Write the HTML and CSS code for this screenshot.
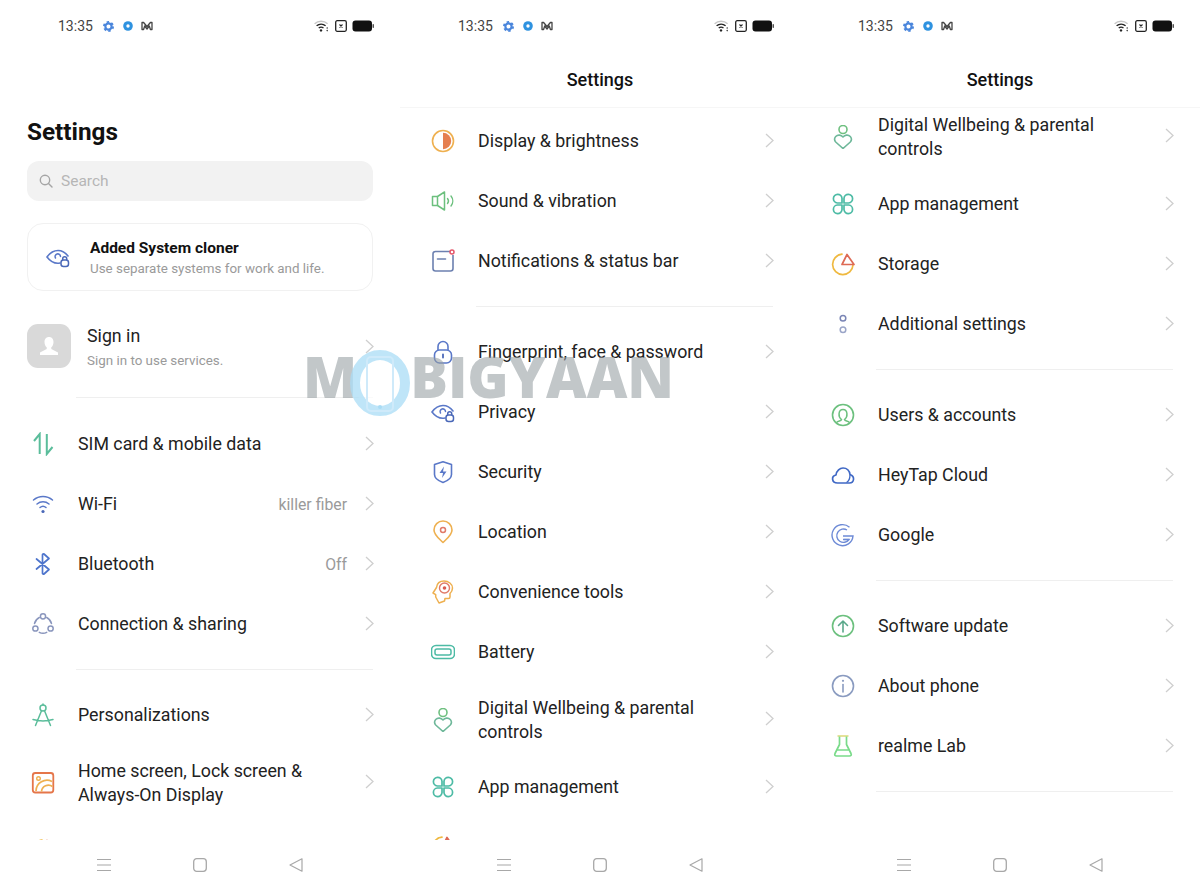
FILE: index.html
```html
<!DOCTYPE html>
<html lang="en">
<head>
<meta charset="utf-8">
<title>Settings</title>
<link rel="stylesheet" href="styles.css">
</head>
<body>
<svg class="sprite" aria-hidden="true">
  <defs>
    <symbol id="s-gear" viewBox="0 0 12 12"><circle cx="6" cy="6" r="3.400" fill="none" stroke="#4a86dc" stroke-width="2.400"/><circle cx="6" cy="6" r="5" fill="none" stroke="#4a86dc" stroke-width="2" stroke-dasharray="2.600 2.636"/></symbol>
    <symbol id="s-dot" viewBox="0 0 10 10"><circle cx="5" cy="5" r="4.800" fill="#2e92e0"/><circle cx="5" cy="5" r="1.700" fill="#fff"/></symbol>
    <symbol id="s-m" viewBox="0 0 12 10"><path d="M1 1.500h1.600L6 5.500l3.400-4H11v7H9.400L8.300 5 6 8 3.700 5 2.600 8.500H1z" fill="none" stroke="#444" stroke-width="1.300" stroke-linejoin="round"/></symbol>
    <symbol id="s-wifi" viewBox="0 0 15 12"><path d="M.6 3.800a9.500 9.500 0 0 1 13 0" fill="none" stroke="#c6c6c6" stroke-width="1.300"/><path d="M2.600 5.800a7 7 0 0 1 9 0M4.700 8a4 4 0 0 1 4.800 0" fill="none" stroke="#222" stroke-width="1.400"/><circle cx="7" cy="10.400" r="1.200" fill="#222"/><circle cx="13.200" cy="8" r=".8" fill="#444"/><circle cx="13.200" cy="10.600" r=".8" fill="#444"/></symbol>
    <symbol id="s-x" viewBox="0 0 12 12"><rect x=".7" y=".7" width="10.600" height="10.600" rx="1.500" fill="none" stroke="#222" stroke-width="1.300"/><path d="M4.500 4.500l3 3m0-3l-3 3" stroke="#222" stroke-width="1.100"/></symbol>
    <symbol id="s-bat" viewBox="0 0 22 12"><rect x=".5" y=".5" width="19.500" height="11" rx="3" fill="#111"/><rect x="20.500" y="4" width="1.500" height="4" rx=".7" fill="#555"/></symbol>

    <symbol id="i-sim" viewBox="0 0 24 24"><path d="M3 9l5.700-7v20M21.500 15l-5.700 7V2" fill="none" stroke="#5bbd9b" stroke-width="2"/></symbol>
    <symbol id="i-wifi" viewBox="0 0 24 24"><path d="M2.500 8a14.500 14.500 0 0 1 19 0M6 12a9.500 9.500 0 0 1 12 0M9 15.500a4.500 4.500 0 0 1 6 0" fill="none" stroke="#5a78c8" stroke-width="1.500" stroke-linecap="round"/><circle cx="12" cy="19.500" r="1.600" fill="#4a68b8"/></symbol>
    <symbol id="i-bt" viewBox="0 0 24 24"><path d="M5.500 7L18 17.500l-5 4.500a1 1 0 0 1-1.500-.7V2.700a1 1 0 0 1 1.500-.7l5 4.500L5.500 17" fill="none" stroke="#4d74cc" stroke-width="1.700" stroke-linecap="round" stroke-linejoin="round"/></symbol>
    <symbol id="i-conn" viewBox="0 0 24 24"><g fill="none" stroke="#8a96bd" stroke-width="1.500"><circle cx="12" cy="4.300" r="2.600"/><circle cx="4.400" cy="16.500" r="2.600"/><circle cx="19.600" cy="16.500" r="2.600"/><path d="M8.300 5.500A9 9 0 0 0 3.500 11.500M15.700 5.500a9 9 0 0 1 4.800 6M8.300 20.300a8 8 0 0 0 7.400 0" stroke-linecap="round"/></g></symbol>
    <symbol id="i-comp" viewBox="0 0 24 24"><g fill="none" stroke="#5bbd9b" stroke-width="1.500" stroke-linecap="round"><circle cx="12" cy="5" r="3"/><path d="M12 1v1M10.500 7.800L4.500 22.500M13.500 7.800l6 14.700M2 16.500c6 1.700 14 1.700 20 0"/></g></symbol>
    <symbol id="i-home" viewBox="0 0 24 24"><rect x="1.800" y="2" width="20.500" height="19.500" rx="2.500" fill="none" stroke="#e5764a" stroke-width="1.800"/><circle cx="7.500" cy="7.500" r="1.800" fill="none" stroke="#eeb050" stroke-width="1.400"/><path d="M5 20a11 11 0 0 1 16-9.500M10.500 20.500a7 7 0 0 1 11-5" fill="none" stroke="#eeb050" stroke-width="1.700"/></symbol>
    <symbol id="i-disp" viewBox="0 0 24 24"><circle cx="12" cy="12" r="10.500" fill="none" stroke="#efb04f" stroke-width="1.600"/><path d="M12 3.800a8.200 8.200 0 0 1 0 16.400z" fill="#e57f50"/></symbol>
    <symbol id="i-sound" viewBox="0 0 24 24"><path d="M1.500 7.500h5v9h-5zM6.500 7.500L13.500 3v18l-7-4.500" fill="none" stroke="#6cc07e" stroke-width="1.500" stroke-linejoin="round"/><path d="M16.500 9.500a4 4 0 0 1 0 5M20 7a8 8 0 0 1 0 10" fill="none" stroke="#6cc07e" stroke-width="1.400" stroke-linecap="round"/></symbol>
    <symbol id="i-notif" viewBox="0 0 24 24"><path d="M19 2.500H4.500a2.500 2.500 0 0 0-2.500 2.500v14.500A2.500 2.500 0 0 0 4.500 22h15a2.500 2.500 0 0 0 2.500-2.500V6" fill="none" stroke="#6c80b0" stroke-width="1.600"/><path d="M6.500 10h8" stroke="#6c80b0" stroke-width="1.600" stroke-linecap="round"/><circle cx="21" cy="3" r="2" fill="none" stroke="#e4576b" stroke-width="1.500"/></symbol>
    <symbol id="i-lock" viewBox="0 0 24 24"><rect x="3.500" y="10" width="17" height="13" rx="5" fill="none" stroke="#5a78c8" stroke-width="1.600"/><path d="M7 10V6.500a5 5 0 0 1 10 0V10" fill="none" stroke="#5a78c8" stroke-width="1.600"/><path d="M12 14.500v3" stroke="#4a68b8" stroke-width="1.800" stroke-linecap="round"/></symbol>
    <symbol id="i-eye" viewBox="0 0 24 24"><path d="M14 18c-5.500 1-10-2-13-6 2.500-3.500 7-6.500 11-6.500 4 0 7.500 2.200 10 5.500" fill="none" stroke="#5a78c8" stroke-width="1.600" stroke-linecap="round"/><path d="M14.500 11.500a2.700 2.700 0 1 0-5 1.500" fill="none" stroke="#5a78c8" stroke-width="1.500" stroke-linecap="round"/><rect x="15" y="15" width="7.500" height="6.500" rx="2.500" fill="#fff" stroke="#4a68b8" stroke-width="1.500"/><path d="M16.700 15v-1.300a2 2 0 0 1 4 0V15" fill="none" stroke="#4a68b8" stroke-width="1.500"/></symbol>
    <symbol id="i-shield" viewBox="0 0 24 24"><path d="M12 1.800l8.500 2.700v10c0 4-4.500 6.500-8.500 8-4-1.500-8.500-4-8.500-8v-10z" fill="none" stroke="#5a78c8" stroke-width="1.600" stroke-linejoin="round"/><path d="M13 6.500L8.500 13h3.500l-1 5 4.500-6.500H12z" fill="#5a78c8"/></symbol>
    <symbol id="i-pin" viewBox="0 0 24 24"><path d="M12 22.500C7.500 18 3 15 3 10a9 9 0 0 1 18 0c0 5-4.500 8-9 12.500z" fill="none" stroke="#eeb050" stroke-width="1.600" stroke-linejoin="round"/><circle cx="12" cy="10" r="2.500" fill="none" stroke="#e07a68" stroke-width="1.500"/></symbol>
    <symbol id="i-head" viewBox="0 0 24 24"><path d="M8 23l5.500-2 .5-2.500h3.500c1 0 1.500-.8 1.500-1.500v-3.500c2-2 2.500-3.500 2.500-5.500C21.500 4 17.500 1 13 1S6 3.500 5.500 7.500L2 13l2.700 1.700V17z" fill="none" stroke="#eeb050" stroke-width="1.500" stroke-linejoin="round"/><circle cx="13.500" cy="8" r="5" fill="none" stroke="#e07a68" stroke-width="1.400"/><circle cx="13.500" cy="8" r="1.800" fill="#d95c50"/></symbol>
    <symbol id="i-bat" viewBox="0 0 24 24"><rect x=".5" y="5.500" width="23" height="13" rx="4.500" fill="none" stroke="#4dbba5" stroke-width="1.600"/><rect x="4" y="9" width="16" height="6" rx="2" fill="none" stroke="#4dbba5" stroke-width="1.500"/></symbol>
    <symbol id="i-well" viewBox="0 0 24 24"><circle cx="12" cy="4.500" r="4" fill="none" stroke="#6fc080" stroke-width="1.600"/><path d="M12 23.500l-7.300-6.500a4.300 4.300 0 0 1 0-5.500c2.300-2.300 5.500-1.500 7.300.5 1.800-2 5-2.800 7.300-.5a4.300 4.300 0 0 1 0 5.500z" fill="none" stroke="#6fb89a" stroke-width="1.600" stroke-linejoin="round"/></symbol>
    <symbol id="i-app" viewBox="0 0 24 24"><g fill="none" stroke="#4dbba5" stroke-width="1.700" stroke-linejoin="round"><path d="M11 11H6.300A4.300 4.300 0 1 1 11 6.300zM13 11h4.700A4.300 4.300 0 1 0 13 6.300zM11 13H6.300A4.300 4.300 0 1 0 11 17.700zM13 13h4.700A4.300 4.300 0 1 1 13 17.700z"/></g></symbol>
    <symbol id="i-stor" viewBox="0 0 24 24"><path d="M11 2.200A10.200 10.200 0 1 0 22 13" fill="none" stroke="#efb940" stroke-width="1.700" stroke-linecap="round"/><path d="M16 2.500L23 12.500H11z" fill="none" stroke="#dd6a55" stroke-width="1.700" stroke-linejoin="round"/></symbol>
    <symbol id="i-more" viewBox="0 0 24 24"><circle cx="12" cy="6.300" r="2.800" fill="none" stroke="#7a85b5" stroke-width="1.500"/><circle cx="12" cy="17.700" r="2.800" fill="none" stroke="#9aa5c8" stroke-width="1.500"/></symbol>
    <symbol id="i-user" viewBox="0 0 24 24"><circle cx="12" cy="12" r="10.500" fill="none" stroke="#6cc07e" stroke-width="1.600"/><path d="M5.500 19.500c2-2 4.500-1 5-3-3.500-2.500-3.500-10 1.500-10s5 7.500 1.500 10c.5 2 3 1 5 3" fill="none" stroke="#6cc07e" stroke-width="1.500"/></symbol>
    <symbol id="i-cloud" viewBox="0 0 24 24"><path d="M6.500 20C.5 20 0 13 5 12c.5-4.500 4-7 7-7 4 0 6.500 3 7 6.500 5.500 2 4 8.500-.500 8.500z" fill="none" stroke="#3f68c5" stroke-width="1.700" stroke-linejoin="round"/><path d="M15.500 19.500c3-1.500 3.500-5 3.500-8" fill="none" stroke="#3f68c5" stroke-width="1.300"/></symbol>
    <symbol id="i-goog" viewBox="0 0 24 24"><path d="M18.500 4.300A10.500 10.500 0 1 0 22 13H12" fill="none" stroke="#6d8ad6" stroke-width="1.400"/><path d="M16 7a6.700 6.700 0 1 0 2 9.500H12.500" fill="none" stroke="#6d8ad6" stroke-width="1.400"/><path d="M12 16.500h6" stroke="#6d8ad6" stroke-width="1.300"/></symbol>
    <symbol id="i-up" viewBox="0 0 24 24"><circle cx="12" cy="12" r="10.500" fill="none" stroke="#6cc07e" stroke-width="1.600"/><path d="M12 18V7M7.500 11.500L12 7l4.500 4.500" fill="none" stroke="#5aa88a" stroke-width="1.600" stroke-linecap="round" stroke-linejoin="round"/></symbol>
    <symbol id="i-info" viewBox="0 0 24 24"><circle cx="12" cy="12" r="10.500" fill="none" stroke="#8a9bc0" stroke-width="1.600"/><path d="M12 10.500V18" stroke="#8a9bc0" stroke-width="1.600" stroke-linecap="round"/><circle cx="12" cy="6.800" r="1.100" fill="#8a9bc0"/></symbol>
    <symbol id="i-flask" viewBox="0 0 24 24"><path d="M6.500 2h11" stroke="#e2df8e" stroke-width="1.800"/><path d="M8.500 2.500v8L4 19.500c-.7 1.500 0 2.500 1.500 2.500h13c1.500 0 2.200-1 1.500-2.500l-4.500-9v-8M6.500 16h11" fill="none" stroke="#7adb8a" stroke-width="1.700" stroke-linejoin="round"/></symbol>
    <symbol id="i-chev" viewBox="0 0 9 15"><path d="M1 1l7 6.500L1 14" fill="none" stroke="#cfcfcf" stroke-width="1.300"/></symbol>
    <symbol id="n-menu" viewBox="0 0 14 14"><path d="M0 1.500h14M0 7h14M0 12.500h14" stroke="#a8a8a8" stroke-width="1.200"/></symbol>
    <symbol id="n-home" viewBox="0 0 14 14"><rect x=".7" y=".7" width="12.600" height="12.600" rx="3" fill="none" stroke="#a8a8a8" stroke-width="1.300"/></symbol>
    <symbol id="n-back" viewBox="0 0 14 14"><path d="M13 .8v12.400L1 7z" fill="none" stroke="#a8a8a8" stroke-width="1.200" stroke-linejoin="round"/></symbol>
  </defs>
</svg>

<main class="screens">

  <section class="panel">
    <header class="status">
      <span class="time">13:35</span>
      <svg class="st gear"><use href="#s-gear"/></svg>
      <svg class="st dot"><use href="#s-dot"/></svg>
      <svg class="st mail"><use href="#s-m"/></svg>
      <span class="grow"></span>
      <svg class="st wifi"><use href="#s-wifi"/></svg>
      <svg class="st xbox"><use href="#s-x"/></svg>
      <svg class="st batt"><use href="#s-bat"/></svg>
    </header>
    <div class="content">
      <h1 class="big-title">Settings</h1>
      <div class="search">
        <svg class="search-icon" viewBox="0 0 14 14"><circle cx="6" cy="6" r="4.700" fill="none" stroke="#a5a5a5" stroke-width="1.400"/><path d="M9.500 9.500L13 13" stroke="#a5a5a5" stroke-width="1.400" stroke-linecap="round"/></svg>
        <span>Search</span>
      </div>
      <div class="card">
        <svg class="card-icon"><use href="#i-eye"/></svg>
        <div class="card-text">
          <div class="card-title">Added System cloner</div>
          <div class="sub">Use separate systems for work and life.</div>
        </div>
      </div>
      <div class="signin">
        <div class="avatar"><svg viewBox="0 0 24 24" class="avatar-icon"><path d="M12 3c-3 0-4.500 2.300-4.500 5 0 2.500 1 4.300 2.200 5.300v1.700L3 18.500V21h18v-2.500L14.300 15v-1.700c1.200-1 2.200-2.800 2.200-5.300 0-2.700-1.500-5-4.500-5z" fill="#fff"/></svg></div>
        <div class="signin-text">
          <div class="label">Sign in</div>
          <div class="sub">Sign in to use services.</div>
        </div>
        <svg class="chev"><use href="#i-chev"/></svg>
      </div>
      <hr class="div first">
      <div class="row"><svg class="ico"><use href="#i-sim"/></svg><span class="label">SIM card &amp; mobile data</span><svg class="chev"><use href="#i-chev"/></svg></div>
      <div class="row"><svg class="ico"><use href="#i-wifi"/></svg><span class="label">Wi-Fi</span><span class="value">killer fiber</span><svg class="chev"><use href="#i-chev"/></svg></div>
      <div class="row"><svg class="ico"><use href="#i-bt"/></svg><span class="label">Bluetooth</span><span class="value">Off</span><svg class="chev"><use href="#i-chev"/></svg></div>
      <div class="row"><svg class="ico"><use href="#i-conn"/></svg><span class="label">Connection &amp; sharing</span><svg class="chev"><use href="#i-chev"/></svg></div>
      <hr class="div">
      <div class="row"><svg class="ico"><use href="#i-comp"/></svg><span class="label">Personalizations</span><svg class="chev"><use href="#i-chev"/></svg></div>
      <div class="row tall"><svg class="ico"><use href="#i-home"/></svg><span class="label">Home screen, Lock screen &amp;<br>Always-On Display</span><svg class="chev"><use href="#i-chev"/></svg></div>
      <div class="row"><svg class="ico"><use href="#i-stor"/></svg></div>
    </div>
    <footer class="nav">
      <svg class="nav-icon"><use href="#n-menu"/></svg>
      <svg class="nav-icon"><use href="#n-home"/></svg>
      <svg class="nav-icon"><use href="#n-back"/></svg>
    </footer>
  </section>

  <section class="panel">
    <header class="status">
      <span class="time">13:35</span>
      <svg class="st gear"><use href="#s-gear"/></svg>
      <svg class="st dot"><use href="#s-dot"/></svg>
      <svg class="st mail"><use href="#s-m"/></svg>
      <span class="grow"></span>
      <svg class="st wifi"><use href="#s-wifi"/></svg>
      <svg class="st xbox"><use href="#s-x"/></svg>
      <svg class="st batt"><use href="#s-bat"/></svg>
    </header>
    <div class="title-bar">Settings</div>
    <div class="content">
      <div class="list list-mid">
        <div class="row"><svg class="ico"><use href="#i-disp"/></svg><span class="label">Display &amp; brightness</span><svg class="chev"><use href="#i-chev"/></svg></div>
        <div class="row"><svg class="ico"><use href="#i-sound"/></svg><span class="label">Sound &amp; vibration</span><svg class="chev"><use href="#i-chev"/></svg></div>
        <div class="row"><svg class="ico"><use href="#i-notif"/></svg><span class="label">Notifications &amp; status bar</span><svg class="chev"><use href="#i-chev"/></svg></div>
        <hr class="div">
        <div class="row"><svg class="ico"><use href="#i-lock"/></svg><span class="label">Fingerprint, face &amp; password</span><svg class="chev"><use href="#i-chev"/></svg></div>
        <div class="row"><svg class="ico"><use href="#i-eye"/></svg><span class="label">Privacy</span><svg class="chev"><use href="#i-chev"/></svg></div>
        <div class="row"><svg class="ico"><use href="#i-shield"/></svg><span class="label">Security</span><svg class="chev"><use href="#i-chev"/></svg></div>
        <div class="row"><svg class="ico"><use href="#i-pin"/></svg><span class="label">Location</span><svg class="chev"><use href="#i-chev"/></svg></div>
        <div class="row"><svg class="ico"><use href="#i-head"/></svg><span class="label">Convenience tools</span><svg class="chev"><use href="#i-chev"/></svg></div>
        <div class="row"><svg class="ico"><use href="#i-bat"/></svg><span class="label">Battery</span><svg class="chev"><use href="#i-chev"/></svg></div>
        <div class="row tall"><svg class="ico"><use href="#i-well"/></svg><span class="label">Digital Wellbeing &amp; parental<br>controls</span><svg class="chev"><use href="#i-chev"/></svg></div>
        <div class="row"><svg class="ico"><use href="#i-app"/></svg><span class="label">App management</span><svg class="chev"><use href="#i-chev"/></svg></div>
        <div class="row"><svg class="ico"><use href="#i-stor"/></svg></div>
      </div>
    </div>
    <footer class="nav">
      <svg class="nav-icon"><use href="#n-menu"/></svg>
      <svg class="nav-icon"><use href="#n-home"/></svg>
      <svg class="nav-icon"><use href="#n-back"/></svg>
    </footer>
  </section>

  <section class="panel">
    <header class="status">
      <span class="time">13:35</span>
      <svg class="st gear"><use href="#s-gear"/></svg>
      <svg class="st dot"><use href="#s-dot"/></svg>
      <svg class="st mail"><use href="#s-m"/></svg>
      <span class="grow"></span>
      <svg class="st wifi"><use href="#s-wifi"/></svg>
      <svg class="st xbox"><use href="#s-x"/></svg>
      <svg class="st batt"><use href="#s-bat"/></svg>
    </header>
    <div class="title-bar">Settings</div>
    <div class="content">
      <div class="list list-end">
        <div class="row tall"><svg class="ico"><use href="#i-well"/></svg><span class="label">Digital Wellbeing &amp; parental<br>controls</span><svg class="chev"><use href="#i-chev"/></svg></div>
        <div class="row"><svg class="ico"><use href="#i-app"/></svg><span class="label">App management</span><svg class="chev"><use href="#i-chev"/></svg></div>
        <div class="row"><svg class="ico"><use href="#i-stor"/></svg><span class="label">Storage</span><svg class="chev"><use href="#i-chev"/></svg></div>
        <div class="row"><svg class="ico"><use href="#i-more"/></svg><span class="label">Additional settings</span><svg class="chev"><use href="#i-chev"/></svg></div>
        <hr class="div">
        <div class="row"><svg class="ico"><use href="#i-user"/></svg><span class="label">Users &amp; accounts</span><svg class="chev"><use href="#i-chev"/></svg></div>
        <div class="row"><svg class="ico"><use href="#i-cloud"/></svg><span class="label">HeyTap Cloud</span><svg class="chev"><use href="#i-chev"/></svg></div>
        <div class="row"><svg class="ico"><use href="#i-goog"/></svg><span class="label">Google</span><svg class="chev"><use href="#i-chev"/></svg></div>
        <hr class="div">
        <div class="row"><svg class="ico"><use href="#i-up"/></svg><span class="label">Software update</span><svg class="chev"><use href="#i-chev"/></svg></div>
        <div class="row"><svg class="ico"><use href="#i-info"/></svg><span class="label">About phone</span><svg class="chev"><use href="#i-chev"/></svg></div>
        <div class="row"><svg class="ico"><use href="#i-flask"/></svg><span class="label">realme Lab</span><svg class="chev"><use href="#i-chev"/></svg></div>
        <hr class="div">
      </div>
    </div>
    <footer class="nav">
      <svg class="nav-icon"><use href="#n-menu"/></svg>
      <svg class="nav-icon"><use href="#n-home"/></svg>
      <svg class="nav-icon"><use href="#n-back"/></svg>
    </footer>
  </section>

  <div class="watermark">
    <span class="wm-text wm-m">M</span>
    <svg class="wm-ring" viewBox="0 0 60 68">
      <ellipse cx="30" cy="34" rx="25" ry="28" fill="#fff" fill-opacity=".65" stroke="#a9dcf5" stroke-opacity=".75" stroke-width="10"/>
      <rect x="17" y="8" width="26" height="54" rx="4" fill="none" stroke="#cfeafa" stroke-width="2"/>
      <circle cx="30" cy="58" r="2" fill="#a9dcf5"/>
    </svg>
    <span class="wm-text">BIGYAAN</span>
  </div>
</main>
</body>
</html>
```

FILE: styles.css
```css
* { box-sizing: border-box; }

html, body {
  margin: 0;
  padding: 0;
  background: #fff;
}

body {
  font-family: Roboto, "Liberation Sans", sans-serif;
  color: #222;
}

.sprite {
  position: absolute;
  width: 0;
  height: 0;
}

.screens {
  position: relative;
  display: flex;
  width: 1200px;
  height: 889px;
  overflow: hidden;
}

.panel {
  display: flex;
  flex-direction: column;
  width: 400px;
  height: 889px;
}

/* status bar */
.status {
  display: flex;
  flex: none;
  align-items: center;
  height: 54px;
  padding: 0 26px 2px 58px;
}

.time {
  width: 34px;
  margin-right: 11px;
  font-size: 14px;
  color: #444;
}

.grow { flex: 1; }

.st { display: block; flex: none; }
.gear { width: 11px; height: 11px; margin-right: 9px; }
.dot { width: 10px; height: 10px; margin-right: 8px; }
.mail { width: 12px; height: 10px; }
.wifi { width: 15px; height: 12px; margin-right: 6px; }
.xbox { width: 12px; height: 12px; margin-right: 5px; }
.batt { width: 22px; height: 12px; }

/* shared scroller */
.content {
  flex: 1;
  min-height: 0;
  overflow: hidden;
}

.title-bar {
  flex: none;
  height: 54px;
  border-bottom: 1px solid #f6f6f6;
  font-size: 18px;
  font-weight: 500;
  line-height: 52px;
  text-align: center;
  color: #111;
}

.list-mid { margin-top: 3px; }
.list-end { margin-top: -9px; }

/* first screen head */
.big-title {
  margin: 63px 0 0 27px;
  font-size: 24.300px;
  font-weight: 700;
  line-height: 30px;
  color: #111;
}

.search {
  display: flex;
  align-items: center;
  gap: 8px;
  height: 40px;
  margin: 14px 27px 0;
  padding-left: 12px;
  border-radius: 12px;
  background: #f2f2f2;
  font-size: 15.500px;
  color: #b6b6b6;
}

.search-icon { width: 14px; height: 14px; flex: none; }

.card {
  display: flex;
  align-items: center;
  height: 68px;
  margin: 22px 27px 0;
  padding-left: 18px;
  border: 1px solid #f1f1f1;
  border-radius: 16px;
}

.card-icon { width: 24px; height: 24px; margin-right: 20px; flex: none; }

.card-text { padding-top: 2px; }

.card-title {
  margin-bottom: 1px;
  font-size: 15.500px;
  font-weight: 700;
  line-height: 20px;
  color: #111;
}

.sub {
  font-size: 13.400px;
  line-height: 20px;
  color: #9a9a9a;
}

.signin {
  display: flex;
  align-items: center;
  height: 46px;
  margin: 32px 26px 0 27px;
}

.avatar {
  display: flex;
  flex: none;
  align-items: center;
  justify-content: center;
  width: 44px;
  height: 44px;
  margin-right: 16px;
  border-radius: 11px;
  background: #d9d9d9;
}

.avatar-icon { width: 24px; height: 24px; }

.signin-text { flex: 1; padding-top: 2px; }
.signin-text .label { display: block; line-height: 26px; }
.signin-text .sub { margin-top: 2px; }
.signin .chev { margin: 0; }

/* rows */
.row {
  display: flex;
  align-items: center;
  height: 60px;
  padding: 0 26px 0 31px;
}

.row.tall { height: 75px; }

.ico {
  flex: none;
  width: 24px;
  height: 24px;
  margin-right: 23px;
}

.label {
  flex: 1;
  font-size: 17.800px;
  line-height: 24px;
  color: #222;
}

.value {
  margin-right: 18px;
  font-size: 15.800px;
  color: #9a9a9a;
}

.chev {
  flex: none;
  width: 9px;
  height: 15px;
  margin-bottom: 2px;
}

.div {
  height: 1px;
  margin: 15px 27px 15px 76px;
  border: 0;
  background: #efefef;
}

.div.first { margin: 28px 27px 16px 76px; }

/* bottom nav */
.nav {
  display: flex;
  flex: none;
  align-items: center;
  justify-content: center;
  gap: 82px;
  height: 49px;
  background: #fff;
}

.nav-icon { width: 14px; height: 14px; }

/* watermark over the screens */
.watermark {
  position: absolute;
  top: 349px;
  left: 303px;
  display: flex;
  align-items: center;
  height: 68px;
  font-family: "Open Sans", "Liberation Sans", sans-serif;
  font-size: 56px;
  font-weight: 800;
  line-height: 1;
  color: rgba(150, 158, 162, .58);
  pointer-events: none;
}

.wm-text { margin-bottom: 14px; }

.wm-m { margin-right: -7px; }

.wm-ring { position: relative; width: 60px; height: 68px; flex: none; }
```
